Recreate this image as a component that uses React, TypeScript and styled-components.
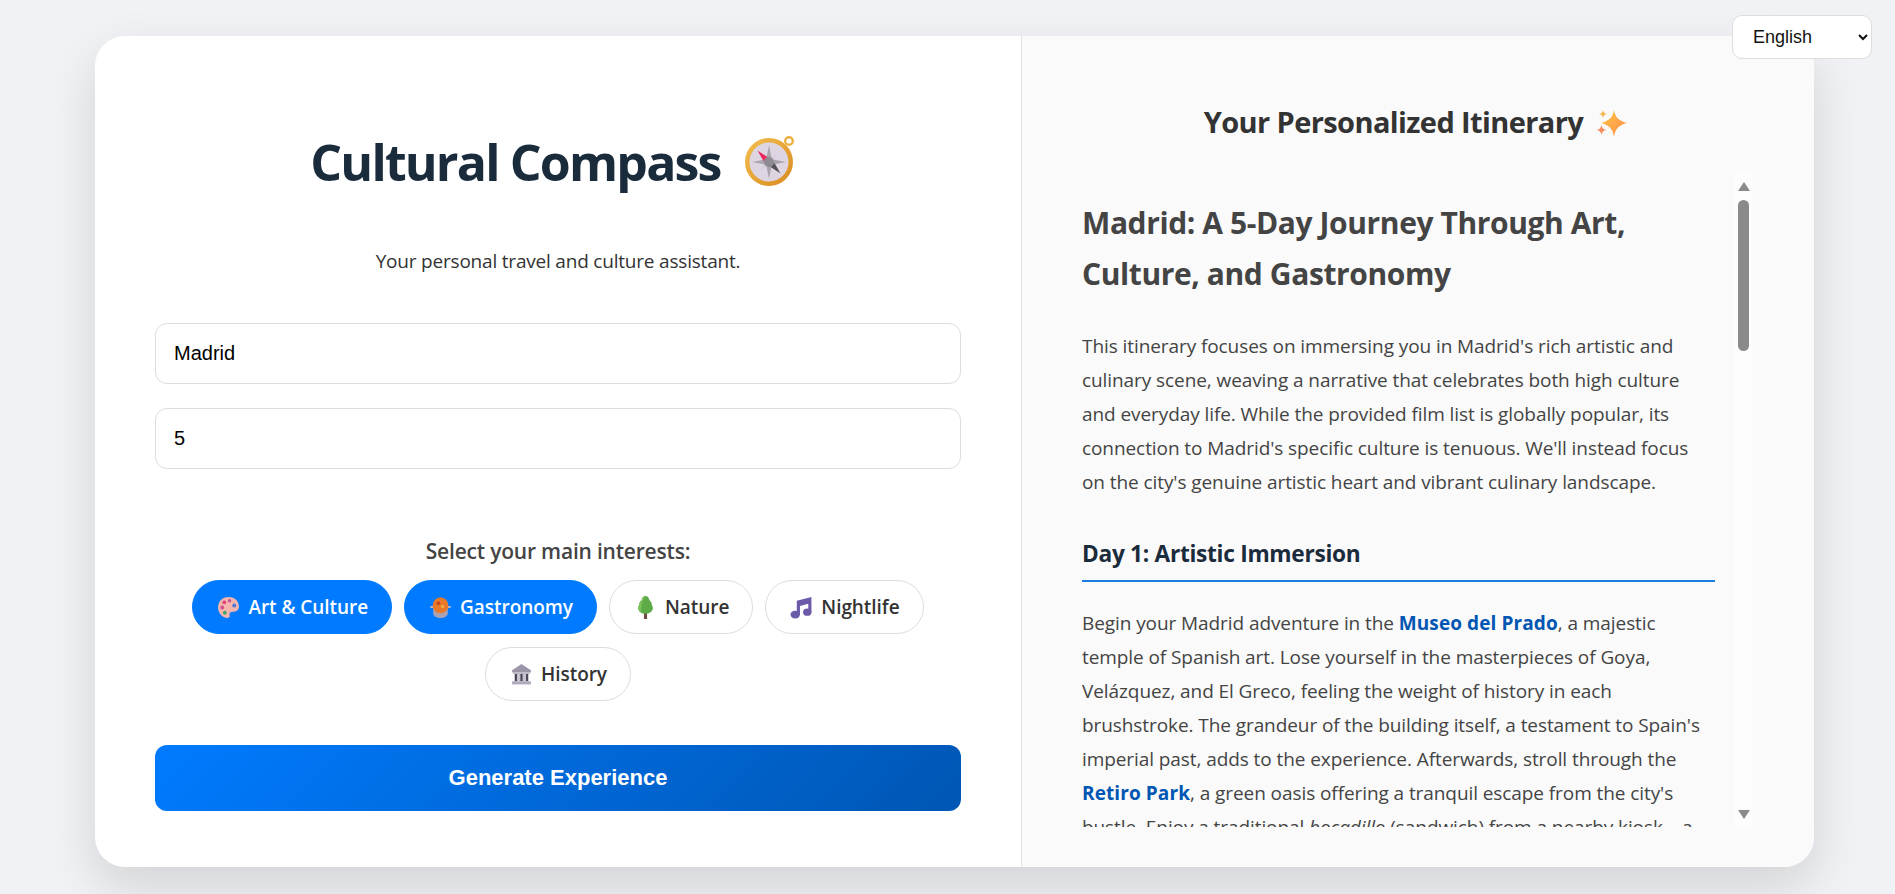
import { useState } from "react";
import styled, { createGlobalStyle } from "styled-components";

const GlobalStyle = createGlobalStyle`
  html, body {
    margin: 0;
    height: 100%;
    overflow: hidden;
    background: #f0f2f5;
    font-family: "Open Sans", "Noto Sans", sans-serif;
  }
`;

const Page = styled.div`
  height: 894px;
  box-sizing: border-box;
  padding: 36px 0 0 95px;
`;

const LanguageSelect = styled.select`
  position: absolute;
  top: 15px;
  right: 23px;
  width: 140px;
  height: 44px;
  padding: 0 0 0 16px;
  background: #fff;
  border: 1px solid #ddd;
  border-radius: 10px;
  font-family: "Liberation Sans", Arial, sans-serif;
  font-size: 18px;
  color: #111;
`;

const Card = styled.main`
  display: flex;
  width: 1719px;
  height: 831px;
  border-radius: 30px;
  overflow: hidden;
  background: #fff;
  box-shadow: 0 20px 50px rgba(0, 0, 0, 0.13);
`;

const FormPanel = styled.section`
  width: 926px;
  flex: none;
  box-sizing: border-box;
  padding: 88px 60px 0;
  display: flex;
  flex-direction: column;
`;

const Title = styled.h1`
  display: flex;
  align-items: center;
  justify-content: center;
  gap: 23px;
  box-sizing: border-box;
  margin: 0;
  height: 70px;
  padding: 5px 8px 0 0;
  font-size: 50px;
  font-weight: 700;
  letter-spacing: -1.8px;
  color: #1a2b3c;
`;

const CompassIcon = styled.svg`
  margin-top: -5px;
`;

const Subtitle = styled.p`
  margin: 54px 0 0;
  text-align: center;
  font-size: 19px;
  line-height: 26px;
  letter-spacing: -0.2px;
  color: #333;
`;

const TextField = styled.input`
  box-sizing: border-box;
  width: 100%;
  height: 61px;
  margin: 0 0 24px;
  padding: 0 18px;
  background: #fff;
  border: 1px solid #ddd;
  border-radius: 12px;
  font-family: "Liberation Sans", Arial, sans-serif;
  font-size: 20px;
  color: #000;
  outline: none;
`;

const Fields = styled.div`
  margin-top: 49px;
  display: flex;
  flex-direction: column;
`;

const InterestLabel = styled.h3`
  margin: 43px 0 0;
  text-align: center;
  font-size: 21px;
  line-height: 30px;
  font-weight: 600;
  letter-spacing: -0.2px;
  color: #444;
`;

const Chips = styled.div`
  display: flex;
  flex-wrap: wrap;
  justify-content: center;
  gap: 13px 12px;
  margin-top: 14px;
`;

const Chip = styled.button<{ $active?: boolean }>`
  display: inline-flex;
  align-items: center;
  gap: 8px;
  height: 54px;
  padding: 0 23px 0 24px;
  border-radius: 27px;
  border: 1px solid ${(p) => (p.$active ? "#007bff" : "#ddd")};
  background: ${(p) => (p.$active ? "#007bff" : "#fff")};
  color: ${(p) => (p.$active ? "#fff" : "#333")};
  font-family: inherit;
  font-size: 19px;
  font-weight: 600;
  letter-spacing: -0.05px;
`;

const GenerateButton = styled.button`
  height: 66px;
  margin-top: 44px;
  border: 0;
  border-radius: 12px;
  background: linear-gradient(135deg, #007bff, #0056b3);
  color: #fff;
  font-family: "Liberation Sans", Arial, sans-serif;
  font-size: 22px;
  font-weight: 700;
`;

const ResultPanel = styled.section`
  flex: 1;
  min-width: 0;
  box-sizing: border-box;
  padding: 0 62px 40px 60px;
  background: #fafafa;
  border-left: 1px solid #e0e0e0;
  display: flex;
  flex-direction: column;
`;

const ResultTitle = styled.h2`
  display: flex;
  flex: none;
  align-items: center;
  justify-content: center;
  gap: 13px;
  box-sizing: border-box;
  height: 135px;
  padding: 36px 2px 0 0;
  margin: 0;
  font-size: 29px;
  font-weight: 700;
  letter-spacing: -0.6px;
  color: #333;
`;

const ScrollArea = styled.div`
  flex: 1;
  min-height: 0;
  display: flex;
  gap: 20px;
`;

const Itinerary = styled.article`
  flex: 1;
  min-width: 0;
  overflow: hidden;
  color: #444;
  font-size: 19px;
  line-height: 34px;
  letter-spacing: -0.08px;
  white-space: nowrap;
`;

const TripHeading = styled.h2`
  margin: 26px 0 30px;
  font-size: 30px;
  line-height: 51px;
  font-weight: 700;
  letter-spacing: -0.4px;
  color: #444;
`;

const DayHeading = styled.h3`
  margin: 39px 0 24px;
  padding-bottom: 10px;
  border-bottom: 2px solid #1a7fe0;
  font-size: 22.7px;
  line-height: 32px;
  font-weight: 700;
  letter-spacing: -0.3px;
  color: #1a2b3c;
`;

const Paragraph = styled.p`
  margin: 24px 0 0;
`;

const Place = styled.strong`
  color: #0056b3;
  font-weight: 700;
  letter-spacing: 0.1px;
`;

const ScrollTrack = styled.div`
  flex: none;
  width: 17px;
  display: flex;
  flex-direction: column;
  align-items: center;
  background: #fdfdfd;
`;

const ScrollArrow = styled.span<{ $down?: boolean }>`
  flex: none;
  width: 0;
  height: 0;
  margin: ${(p) => (p.$down ? "auto 0 8px" : "11px 0 0")};
  border-left: 6.5px solid transparent;
  border-right: 6.5px solid transparent;
  ${(p) => (p.$down ? "border-top" : "border-bottom")}: 9px solid #8a8a8a;
`;

const ScrollThumb = styled.div`
  flex: none;
  width: 11px;
  height: 151px;
  margin-top: 9px;
  border-radius: 6px;
  background: #8a8a8a;
`;

const Compass = () => (
  <CompassIcon width="54" height="54" viewBox="0 0 54 54">
    <defs>
      <linearGradient id="ring" x1="0" y1="0" x2="1" y2="1">
        <stop offset="0" stopColor="#f3c04f" />
        <stop offset="1" stopColor="#d98a1f" />
      </linearGradient>
    </defs>
    <circle cx="45" cy="9" r="3.8" fill="none" stroke="#eeb140" strokeWidth="2.4" />
    <circle cx="25" cy="30" r="24" fill="url(#ring)" />
    <circle cx="25" cy="30" r="19.5" fill="#ddd6e2" />
    <path d="M25 30l-9-9 7 6zM25 30l9-9-6 7zM25 30l-9 9 6-7zM25 30l9 9-7-6z" fill="#b5b1b9" />
    <path d="M25 13l2.8 14.200L42 30l-14.200 2.800L25 47l-2.800-14.200L8 30l14.200-2.800z" fill="#a9a5ad" />
    <path d="M13.500 18.500l10 6.500-4 4z" fill="#e8285f" />
    <path d="M36.500 41.500l-10-6.500 4-4z" fill="#55525a" />
    <circle cx="25" cy="30" r="5" fill="#8f8b93" />
  </CompassIcon>
);

const Sparkles = () => (
  <svg width="32" height="32" viewBox="0 0 32 32">
    <defs>
      <linearGradient id="spark" x1="0" y1="0" x2="1" y2="1">
        <stop offset="0" stopColor="#ffc640" />
        <stop offset="1" stopColor="#ff8a50" />
      </linearGradient>
    </defs>
    <path d="M18 4C19 11 23 15 31 17C23 19 19 23 18 31C17 23 13 19 5 17C13 15 17 11 18 4z" fill="url(#spark)" />
    <path d="M7 4c.4 2.500 1.500 3.600 4 4-2.500.4-3.600 1.500-4 4-.4-2.500-1.500-3.600-4-4 2.500-.4 3.600-1.500 4-4z" fill="#f8b455" />
    <path d="M5.500 19c.5 3 2 4.500 5 5-3 .5-4.500 2-5 5-.5-3-2-4.500-5-5 3-.5 4.500-2 5-5z" fill="#fa8d5f" />
  </svg>
);

const Palette = () => (
  <svg width="23" height="23" viewBox="0 0 22 22">
    <path d="M11 1C5 1 1 5.500 1 11c0 5 4 10 9 10 2 0 2.500-1.500 2-3-.5-2 1-3 3-3 3 0 6-1 6-5 0-5-4-9-10-9z" fill="#f5b5ad" />
    <circle cx="7" cy="6" r="1.800" fill="#e0407a" />
    <circle cx="12" cy="4.500" r="1.600" fill="#c34fa0" />
    <circle cx="16.500" cy="9" r="1.900" fill="#4f79d8" />
    <circle cx="5" cy="11" r="1.800" fill="#d34f8c" />
    <circle cx="7.500" cy="16" r="1.900" fill="#3fa56f" />
  </svg>
);

const Pot = () => (
  <svg width="23" height="23" viewBox="0 0 22 22">
    <rect x="1" y="9.500" width="20" height="2" rx="1" fill="#b9b4c2" />
    <path d="M4 11h14v5c0 3-2.500 5-7 5s-7-2-7-5z" fill="#a9a2b5" />
    <circle cx="11" cy="9" r="7.500" fill="#e9792a" />
    <circle cx="9" cy="7" r="1.700" fill="#c4461c" />
    <circle cx="13" cy="10" r="1.500" fill="#f4b23f" />
  </svg>
);

const Tree = () => (
  <svg width="23" height="23" viewBox="0 0 22 22">
    <rect x="9.500" y="15" width="3" height="7" fill="#6d4c41" />
    <path d="M11 0c2 0 3.500 2 3.800 4 1.500 1 2.400 3 2.200 4.500 1 1 1.300 3 .8 4.500-.8 2.500-3 4-6.800 4s-6-1.500-6.800-4c-.5-1.500-.2-3.500.8-4.500C4.800 7 5.700 5 7.200 4 7.500 2 9 0 11 0z" fill="#5cab46" />
    <path d="M11 0c-2 0-3.500 2-3.800 4-1.500 1-2.400 3-2.200 4.500-1 1-1.300 3-.8 4.500.4 1.200 1.200 2.200 2.400 3C6.500 10 8 4 11 0z" fill="#7cc25c" />
  </svg>
);

const Music = () => (
  <svg width="23" height="23" viewBox="0 0 22 22">
    <path d="M6.500 4.500L20.500 1v14.500h-3V7.500l-8 2V18h-3z" fill="#6a5aa8" />
    <ellipse cx="5" cy="17.800" rx="4.500" ry="3.800" fill="#6a5aa8" />
    <ellipse cx="16.500" cy="15.500" rx="4" ry="3.500" fill="#6a5aa8" />
  </svg>
);

const Museum = () => (
  <svg width="23" height="23" viewBox="0 0 22 22">
    <path d="M11 1l9 6v2H2V7z" fill="#9c95a8" />
    <rect x="3" y="9" width="16" height="1.500" fill="#bcb6c6" />
    <rect x="4.500" y="10.500" width="2.500" height="7" fill="#4d4757" />
    <rect x="9.750" y="10.500" width="2.500" height="7" fill="#4d4757" />
    <rect x="15" y="10.500" width="2.500" height="7" fill="#4d4757" />
    <rect x="7" y="10.500" width="2.750" height="7" fill="#c9c4d1" />
    <rect x="12.250" y="10.500" width="2.750" height="7" fill="#c9c4d1" />
    <rect x="2" y="17.500" width="18" height="3" fill="#b0a9bb" />
  </svg>
);

const interests = [
  { name: "Art & Culture", icon: <Palette /> },
  { name: "Gastronomy", icon: <Pot /> },
  { name: "Nature", icon: <Tree /> },
  { name: "Nightlife", icon: <Music /> },
  { name: "History", icon: <Museum /> },
];

export default function App() {
  const [selected, setSelected] = useState(["Art & Culture", "Gastronomy"]);

  const toggle = (name: string) => {
    setSelected((s) => (s.includes(name) ? s.filter((x) => x !== name) : [...s, name]));
  };

  return (
    <Page>
      <GlobalStyle />
      <LanguageSelect defaultValue="en">
        <option value="en">English</option>
        <option value="es">Español</option>
      </LanguageSelect>
      <Card>
        <FormPanel>
          <Title>
            Cultural Compass <Compass />
          </Title>
          <Subtitle>Your personal travel and culture assistant.</Subtitle>
          <Fields>
            <TextField defaultValue="Madrid" />
            <TextField defaultValue="5" />
          </Fields>
          <InterestLabel>Select your main interests:</InterestLabel>
          <Chips>
            {interests.map((i) => (
              <Chip key={i.name} $active={selected.includes(i.name)} onClick={() => toggle(i.name)}>
                {i.icon}
                {i.name}
              </Chip>
            ))}
          </Chips>
          <GenerateButton>Generate Experience</GenerateButton>
        </FormPanel>
        <ResultPanel>
          <ResultTitle>
            Your Personalized Itinerary <Sparkles />
          </ResultTitle>
          <ScrollArea>
            <Itinerary>
              <TripHeading>
                Madrid: A 5-Day Journey Through Art,
                <br />
                Culture, and Gastronomy
              </TripHeading>
              <Paragraph>
                This itinerary focuses on immersing you in Madrid's rich artistic and
                <br />
                culinary scene, weaving a narrative that celebrates both high culture
                <br />
                and everyday life. While the provided film list is globally popular, its
                <br />
                connection to Madrid's specific culture is tenuous. We'll instead focus
                <br />
                on the city's genuine artistic heart and vibrant culinary landscape.
              </Paragraph>
              <DayHeading>Day 1: Artistic Immersion</DayHeading>
              <Paragraph>
                Begin your Madrid adventure in the <Place>Museo del Prado</Place>, a majestic
                <br />
                temple of Spanish art. Lose yourself in the masterpieces of Goya,
                <br />
                Velázquez, and El Greco, feeling the weight of history in each
                <br />
                brushstroke. The grandeur of the building itself, a testament to Spain's
                <br />
                imperial past, adds to the experience. Afterwards, stroll through the
                <br />
                <Place>Retiro Park</Place>, a green oasis offering a tranquil escape from the city's
                <br />
                bustle. Enjoy a traditional <em>bocadillo</em> (sandwich) from a nearby kiosk – a
              </Paragraph>
            </Itinerary>
            <ScrollTrack>
              <ScrollArrow />
              <ScrollThumb />
              <ScrollArrow $down />
            </ScrollTrack>
          </ScrollArea>
        </ResultPanel>
      </Card>
    </Page>
  );
}
